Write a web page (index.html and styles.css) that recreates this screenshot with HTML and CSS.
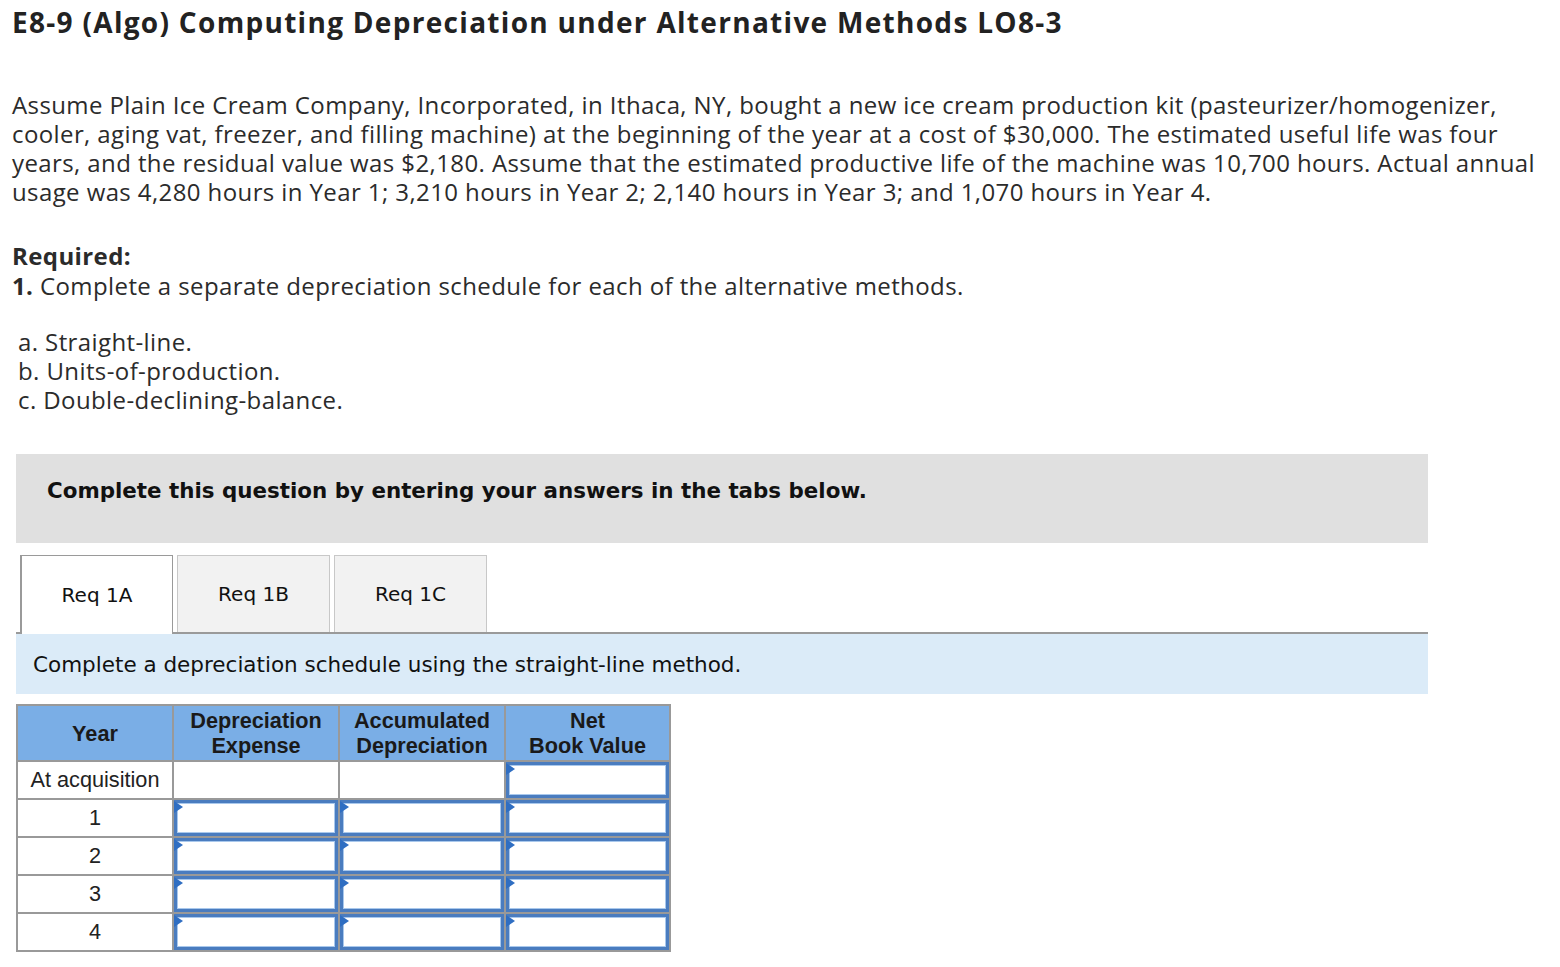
FILE: index.html
```html
<!DOCTYPE html>
<html>
<head>
<meta charset="utf-8">
<link rel="stylesheet" href="styles.css">
</head>
<body>
<h1 class="title">E8-9 (Algo) Computing Depreciation under Alternative Methods LO8-3</h1>
<p class="intro">Assume Plain Ice Cream Company, Incorporated, in Ithaca, NY, bought a new ice cream production kit (pasteurizer/homogenizer, cooler, aging vat, freezer, and filling machine) at the beginning of the year at a cost of $30,000. The estimated useful life was four years, and the residual value was $2,180. Assume that the estimated productive life of the machine was 10,700 hours. Actual annual usage was 4,280 hours in Year 1; 3,210 hours in Year 2; 2,140 hours in Year 3; and 1,070 hours in Year 4.</p>
<div class="required">
  <div class="req-head">Required:</div>
  <div><b>1.</b> Complete a separate depreciation schedule for each of the alternative methods.</div>
</div>
<p class="methods">a. Straight-line.
b. Units-of-production.
c. Double-declining-balance.</p>
<div class="notice">Complete this question by entering your answers in the tabs below.</div>
<div class="tabs">
  <div class="tab active">Req 1A</div>
  <div class="tab">Req 1B</div>
  <div class="tab">Req 1C</div>
</div>
<div class="instruction">Complete a depreciation schedule using the straight-line method.</div>
<table class="sched">
  <colgroup><col class="c1"><col class="c2"><col class="c3"><col class="c4"></colgroup>
  <thead>
    <tr><th>Year</th><th>Depreciation<br>Expense</th><th>Accumulated<br>Depreciation</th><th>Net<br>Book Value</th></tr>
  </thead>
  <tbody>
    <tr><td class="yr">At acquisition</td><td></td><td></td><td class="in"><div class="box"></div></td></tr>
    <tr><td class="yr">1</td><td class="in"><div class="box"></div></td><td class="in"><div class="box"></div></td><td class="in"><div class="box"></div></td></tr>
    <tr><td class="yr">2</td><td class="in"><div class="box"></div></td><td class="in"><div class="box"></div></td><td class="in"><div class="box"></div></td></tr>
    <tr><td class="yr">3</td><td class="in"><div class="box"></div></td><td class="in"><div class="box"></div></td><td class="in"><div class="box"></div></td></tr>
    <tr><td class="yr">4</td><td class="in"><div class="box"></div></td><td class="in"><div class="box"></div></td><td class="in"><div class="box"></div></td></tr>
  </tbody>
</table>
</body>
</html>
```
FILE: styles.css
```css
html, body { background: #fff; }
body {
  margin: 0;
  padding: 0 8px 0 12px;
  font-family: "Open Sans", "Lato", sans-serif;
  color: #2b2b2b;
}
.title {
  margin: 4px 0 0 0;
  font-size: 28px;
  line-height: 36px;
  font-weight: 700;
  letter-spacing: 1.3px;
  color: #222;
}
.intro {
  margin: 50px 0 0 0;
  font-size: 24px;
  line-height: 29px;
  letter-spacing: 0.4px;
}
.required {
  margin-top: 35px;
  font-size: 24px;
  line-height: 30px;
  letter-spacing: 0.4px;
}
.req-head { font-weight: 700; }
.methods {
  margin: 26px 0 0 6px;
  font-size: 24px;
  line-height: 29px;
  letter-spacing: 0.4px;
  white-space: pre-line;
}
.notice {
  margin: 40px 0 0 4px;
  width: 1412px;
  box-sizing: border-box;
  height: 89px;
  background: #e0e0e0;
  padding: 24px 0 0 31px;
  font-family: "DejaVu Sans", Verdana, sans-serif;
  font-weight: 700;
  font-size: 21.4px;
  color: #111;
}
.tabs {
  margin: 12px 0 0 4px;
  width: 1412px;
  display: flex;
  gap: 4px;
  padding-left: 4px;
  box-sizing: border-box;
  border-bottom: 2px solid #9a9a9a;
  height: 79px;
}
.tab {
  width: 153px;
  height: 77px;
  box-sizing: border-box;
  border: 1px solid #c8c8c8;
  border-bottom: none;
  background: #f2f2f2;
  display: flex;
  align-items: center;
  justify-content: center;
  font-family: "DejaVu Sans", Verdana, sans-serif;
  font-size: 20px;
  color: #111;
}
.tab.active {
  background: #fff;
  border: 1px solid #9a9a9a;
  border-bottom: none;
  height: 79px;
  margin-bottom: -2px;
  border-left-width: 2px;
}
.instruction {
  margin: 0 0 0 4px;
  width: 1412px;
  height: 60px;
  box-sizing: border-box;
  background: #dbebf8;
  padding: 18px 0 0 17px;
  font-family: "DejaVu Sans", Verdana, sans-serif;
  font-size: 21.5px;
  color: #111;
}
.sched {
  margin: 10px 0 0 4px;
  border-collapse: collapse;
  font-family: "Liberation Sans", Arial, sans-serif;
  font-size: 21.7px;
  color: #222;
}
.c1 { width: 156px; }
.c2 { width: 166px; }
.c3 { width: 166px; }
.c4 { width: 165px; }
.sched th {
  background: #7aaee6;
  border: 2px solid #999;
  height: 54px;
  padding: 0;
  font-weight: 700;
  line-height: 25px;
  color: #1a1a1a;
}
.sched td {
  border: 2px solid #999;
  height: 36px;
  padding: 0;
  text-align: center;
}
.box {
  position: relative;
  height: 36px;
  box-sizing: border-box;
  border: 3px solid #4a7cbf;
  box-shadow: inset 0 0 0 1px #a9c8ec;
  background: #fff;
}
.box::before {
  content: "";
  position: absolute;
  left: -3px;
  top: -2px;
  width: 9px;
  height: 12px;
  background: #2f6ec2;
  clip-path: polygon(0 0, 100% 50%, 0 100%);
}
```
